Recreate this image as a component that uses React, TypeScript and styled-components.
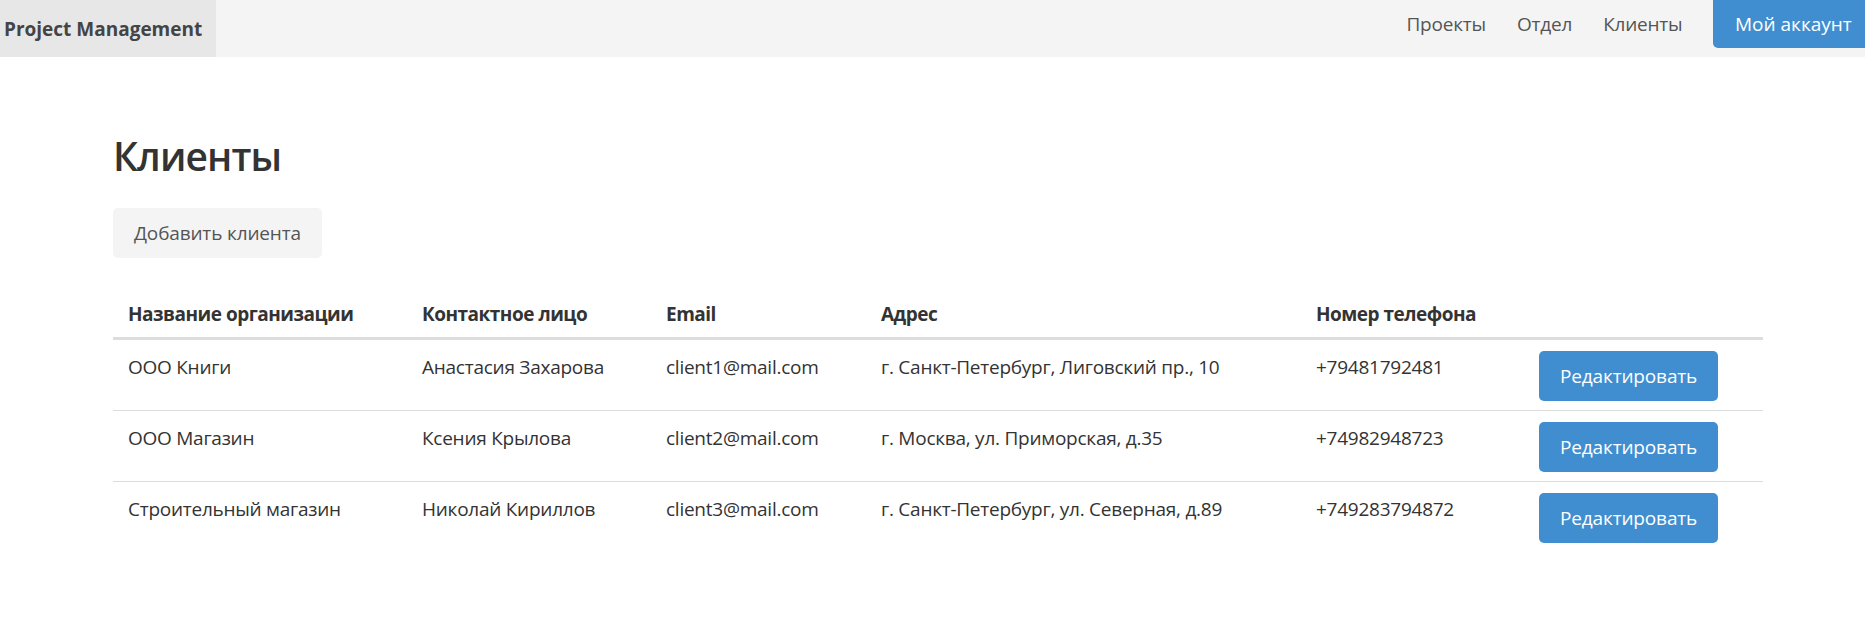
import styled, { createGlobalStyle } from "styled-components"

const GlobalStyle = createGlobalStyle`
    html, body {
        margin: 0;
        padding: 0;
        background: #ffffff;
    }
    body {
        font-family: "Open Sans", "Noto Sans", "Liberation Sans", sans-serif;
        color: #333333;
        font-size: 19px;
    }
    * {
        box-sizing: border-box;
    }
`

const Navbar = styled.nav`
    display: flex;
    align-items: stretch;
    justify-content: space-between;
    height: 57px;
    background: #f4f4f4;
    overflow: hidden;
`

const Brand = styled.a`
    display: flex;
    align-items: center;
    height: 100%;
    padding: 0 14px 0 4px;
    background: #e7e7e7;
    color: #444444;
    font-weight: 700;
    font-size: 19px;
    text-decoration: none;
`

const NavMenu = styled.ul`
    display: flex;
    align-items: flex-start;
    list-style: none;
    margin: 0 -10px 0 0;
    padding: 0;
`

const NavLink = styled.a`
    display: block;
    padding: 0 15.5px;
    line-height: 48px;
    color: #555555;
    font-size: 19px;
    letter-spacing: -0.2px;
    text-decoration: none;
`

const AccountButton = styled.a`
    display: block;
    padding: 0 22px;
    line-height: 48px;
    margin-left: 15px;
    width: 162px;
    background: #408ed0;
    color: #ffffff;
    font-size: 19px;
    border-radius: 0 0 5px 5px;
    text-decoration: none;
    white-space: nowrap;
`

const Container = styled.main`
    padding: 0 102px 0 113px;
`

const Title = styled.h1`
    margin: 77px 0 0;
    font-size: 39px;
    font-weight: 600;
    letter-spacing: -0.9px;
    line-height: 44px;
    color: #333333;
`

const Button = styled.button<{ primary?: boolean }>`
    display: inline-block;
    height: 50px;
    padding: 0 21px;
    border: none;
    border-radius: 5px;
    font-family: inherit;
    font-size: 19px;
    letter-spacing: -0.15px;
    line-height: 50px;
    cursor: pointer;
    background: ${props => (props.primary ? "#408ed0" : "#f4f4f4")};
    color: ${props => (props.primary ? "#ffffff" : "#555555")};
    white-space: nowrap;
`

const Toolbar = styled.div`
    margin-top: 30px;
`

const Table = styled.table`
    width: 100%;
    margin-top: 32px;
    border-collapse: collapse;
    table-layout: fixed;
`

const Th = styled.th<{ width: number }>`
    width: ${props => props.width}px;
    padding: 9px 15px 8px;
    text-align: left;
    font-weight: 700;
    letter-spacing: -0.5px;
    line-height: 30px;
    color: #333333;
    border-bottom: 3px solid #dddddd;
`

const Row = styled.tr`
    & + & td {
        border-top: 1px solid #dddddd;
    }
`

const Td = styled.td`
    padding: 11px 15px 9px;
    vertical-align: top;
    line-height: 32px;
    letter-spacing: -0.25px;
    white-space: nowrap;
`

const columns = [
    { title: "Название организации", width: 294 },
    { title: "Контактное лицо", width: 244 },
    { title: "Email", width: 215 },
    { title: "Адрес", width: 435 },
    { title: "Номер телефона", width: 223 },
    { title: "", width: 239 }
]

const clients = [
    {
        name: "ООО Книги",
        contact: "Анастасия Захарова",
        email: "client1@mail.com",
        address: "г. Санкт-Петербург, Лиговский пр., 10",
        phone: "+79481792481"
    },
    {
        name: "ООО Магазин",
        contact: "Ксения Крылова",
        email: "client2@mail.com",
        address: "г. Москва, ул. Приморская, д.35",
        phone: "+74982948723"
    },
    {
        name: "Строительный магазин",
        contact: "Николай Кириллов",
        email: "client3@mail.com",
        address: "г. Санкт-Петербург, ул. Северная, д.89",
        phone: "+749283794872"
    }
]

const App = () => (
    <>
        <GlobalStyle />
        <Navbar>
            <Brand href="#">Project Management</Brand>
            <NavMenu>
                <li><NavLink href="#">Проекты</NavLink></li>
                <li><NavLink href="#">Отдел</NavLink></li>
                <li><NavLink href="#">Клиенты</NavLink></li>
                <li><AccountButton href="#">Мой аккаунт</AccountButton></li>
            </NavMenu>
        </Navbar>
        <Container>
            <Title>Клиенты</Title>
            <Toolbar>
                <Button>Добавить клиента</Button>
            </Toolbar>
            <Table>
                <thead>
                    <tr>
                        {columns.map(col => (
                            <Th key={col.width} width={col.width}>{col.title}</Th>
                        ))}
                    </tr>
                </thead>
                <tbody>
                    {clients.map(client => (
                        <Row key={client.email}>
                            <Td>{client.name}</Td>
                            <Td>{client.contact}</Td>
                            <Td>{client.email}</Td>
                            <Td>{client.address}</Td>
                            <Td>{client.phone}</Td>
                            <Td>
                                <Button primary>Редактировать</Button>
                            </Td>
                        </Row>
                    ))}
                </tbody>
            </Table>
        </Container>
    </>
)

export default App
